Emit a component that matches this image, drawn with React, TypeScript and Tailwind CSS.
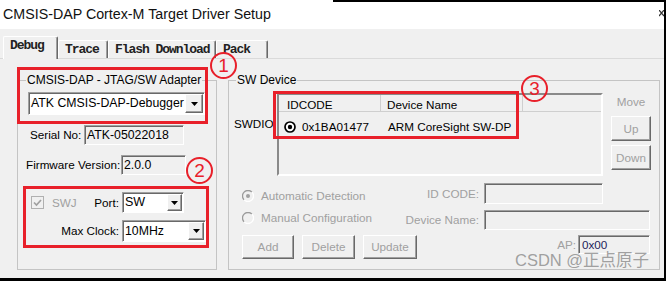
import React from "react";

const sunken =
  "border border-t-[#a0a0a0] border-l-[#a0a0a0] border-r-white border-b-white shadow-[inset_1px_1px_0_#696969]";
const raised =
  "border border-t-white border-l-white border-r-[#696969] border-b-[#696969] shadow-[inset_-1px_-1px_0_#a0a0a0]";
const muted = "text-[#a0a0a0]";

function Arrow() {
  return (
    <svg width="7" height="4" viewBox="0 0 7 4">
      <path d="M0 0h7L3.5 4z" fill="#000" />
    </svg>
  );
}

function Combo({ text, className, btn }: { text: string; className: string; btn: string }) {
  return (
    <div className={`flex items-center bg-white ${sunken} ${className}`}>
      <span className="flex-1 pl-[2px] whitespace-nowrap">{text}</span>
      <span className={`self-stretch m-[1px] flex items-center justify-center bg-[#f0f0f0] ${raised} ${btn}`}>
        <Arrow />
      </span>
    </div>
  );
}

function Btn({ label, className }: { label: string; className: string }) {
  return (
    <div className={`flex items-center justify-center bg-[#f0f0f0] ${raised} ${muted} ${className}`}>{label}</div>
  );
}

function Radio({ checked }: { checked?: boolean }) {
  return (
    <svg width="12" height="12" viewBox="0 0 12 12" className="shrink-0">
      <circle cx="6" cy="6" r="5.2" fill="#f0f0f0" />
      <path d="M9.9 2.1A5.5 5.5 0 0 0 2.1 9.9" fill="none" stroke="#9a9a9a" strokeWidth="1.3" />
      <path d="M2.1 9.9A5.5 5.5 0 0 0 9.9 2.1" fill="none" stroke="#ffffff" strokeWidth="1.3" />
      {checked && <circle cx="6" cy="6" r="2" fill="#a0a0a0" />}
    </svg>
  );
}

function Checkbox() {
  return (
    <svg width="13" height="13" viewBox="0 0 13 13" className="shrink-0">
      <rect x="0.5" y="0.5" width="12" height="12" fill="#f0f0f0" stroke="#b0b0b0" />
      <path d="M3 6.5l2.5 2.6L10 4" fill="none" stroke="#a0a0a0" strokeWidth="1.7" />
    </svg>
  );
}

function Tab({ label, active, className }: { label: string; active?: boolean; className: string }) {
  return (
    <div
      className={`shrink-0 border-t border-l border-white border-r border-r-[#696969] rounded-t-[2px] shadow-[inset_-1px_0_0_#a0a0a0] bg-[#f0f0f0] pl-[6px] leading-[15px] whitespace-nowrap ${
        active ? "h-[23px] pt-[1px] -mb-px relative" : "h-[18px] pt-[1px]"
      } ${className}`}
    >
      {label}
    </div>
  );
}

function Marker({ n, className }: { n: string; className: string }) {
  return (
    <div
      className={`absolute w-[27px] h-[27px] rounded-full border-2 border-[#e8202a] flex items-center justify-center text-[#e8202a] text-[19px] leading-none ${className}`}
    >
      {n}
    </div>
  );
}

function Group({ title, className, children }: { title: string; className: string; children: React.ReactNode }) {
  return (
    <div className={`shrink-0 h-[190px] border border-[#c4c4c4] flex flex-col ${className}`}>
      <span className="self-start -mt-[8px] px-[1px] bg-[#f0f0f0] leading-[14px] text-[12px] whitespace-nowrap">
        {title}
      </span>
      {children}
    </div>
  );
}

function Field({ label, className, box }: { label: string; className: string; box: string }) {
  return (
    <div className={`flex items-center ${className}`}>
      <span className={`w-[66px] flex justify-end pr-[5px] whitespace-nowrap ${muted}`}>{label}</span>
      <div className={`${sunken} ${box}`} />
    </div>
  );
}

export default function App() {
  return (
    <div className="relative w-[666px] h-[281px] overflow-hidden bg-[#f0f0f0] border-r-2 border-b-[3px] border-black font-['Liberation_Sans',Arial,sans-serif] text-[11.7px] text-black">
      {/* title bar */}
      <div className="h-[29px] bg-white flex flex-col">
        <div className="h-[2px] bg-[linear-gradient(to_right,transparent_333px,#000_333px)]" />
        <div className="flex items-center h-[23px] pl-[3px]">
          <span className="text-[14.25px] leading-[18px] text-[#111]">CMSIS-DAP Cortex-M Target Driver Setup</span>
          <svg width="5" height="8" viewBox="0 0 5 8" className="ml-auto">
            <path d="M0 0L5 6M0 6L5 0" stroke="#333" strokeWidth="1.2" />
          </svg>
        </div>
      </div>

      {/* tabs */}
      <div className="h-[29px] flex items-end pl-[3px] font-['Liberation_Mono',monospace] font-bold text-[13px] tracking-[-1.05px] text-[#222]">
        <Tab label="Debug" active className="w-[55px]" />
        <Tab label="Trace" className="w-[50px]" />
        <Tab label="Flash Download" className="w-[108px]" />
        <Tab label="Pack" className="w-[52px]" />
      </div>

      {/* panel */}
      <div className="h-[220px] border-t border-[#dadada] pt-[21px] pl-[17px] flex gap-[11px]">
        <Group title="CMSIS-DAP - JTAG/SW Adapter" className="w-[200px] pl-[8px]">
          <div className="flex flex-col -ml-[8px]">
            <Combo
              text="ATK CMSIS-DAP-Debugger"
              className="mt-[5px] ml-[10px] w-[177px] h-[23px] text-[12.3px]"
              btn="w-[18px]"
            />
            <div className="mt-[10px] flex items-center h-[20px]">
              <span className="ml-[12px] w-[54px]">Serial No:</span>
              <div className={`w-[100px] h-[20px] pl-[2px] flex items-center text-[12.3px] ${sunken}`}>ATK-05022018</div>
            </div>
            <div className="mt-[10px] flex items-center h-[20px]">
              <span className="ml-[8px] w-[95px] whitespace-nowrap">Firmware Version:</span>
              <div className={`w-[65px] h-[20px] pl-[2px] flex items-center text-[12.3px] ${sunken}`}>2.0.0</div>
            </div>
            <div className="mt-[17px] flex items-center h-[21px]">
              <div className="w-[104px] flex items-center pl-[13px] pr-[3px]">
                <Checkbox />
                <span className={`ml-[8px] ${muted}`}>SWJ</span>
                <span className="ml-auto">Port:</span>
              </div>
              <Combo text="SW" className="w-[62px] h-[21px] text-[12.5px]" btn="w-[15px]" />
            </div>
            <div className="mt-[7px] flex items-center h-[22px]">
              <div className="w-[104px] text-right pr-[3px]">Max Clock:</div>
              <Combo text="10MHz" className="w-[84px] h-[22px] text-[12.3px]" btn="w-[16px]" />
            </div>
          </div>
        </Group>

        <Group title="SW Device" className="w-[432px] pl-[7px]">
          <div className="flex flex-col -ml-[7px]">
            <div className="mt-[6px] flex items-start">
              <span className="ml-[5px] w-[43px] mt-[24px] leading-[14px]">SWDIO</span>
              <div className="w-[326px] h-[83px] border-2 border-t-[#8a8a8a] border-l-[#8a8a8a] border-r-white border-b-white flex flex-col">
                <div className="flex h-[17px] border-b border-[#cfcfcf] leading-[19px]">
                  <div className="w-[102px] pl-[8px] border-r border-[#cfcfcf]">IDCODE</div>
                  <div className="w-[142px] pl-[6px] border-r border-[#cfcfcf]">Device Name</div>
                  <div className="flex-1" />
                </div>
                <div className="mt-[7px] flex items-center h-[16px]">
                  <div className="w-[102px] pl-[5px] flex items-center gap-[6px]">
                    <svg width="12" height="12" viewBox="0 0 12 12">
                      <circle cx="6" cy="6" r="5" fill="#fff" stroke="#000" strokeWidth="1.7" />
                      <circle cx="6" cy="6" r="2.2" fill="#000" />
                    </svg>
                    <span>0x1BA01477</span>
                  </div>
                  <div className="pl-[7px] whitespace-nowrap">ARM CoreSight SW-DP</div>
                </div>
              </div>
              <div className="ml-[8px] w-[40px] flex flex-col">
                <span className={`mt-[2px] text-center leading-[14px] ${muted}`}>Move</span>
                <Btn label="Up" className="mt-[7px] h-[25px]" />
                <Btn label="Down" className="mt-[4px] h-[25px]" />
              </div>
            </div>

            <div className="flex items-start">
              <div className="ml-[13px] flex flex-col">
                <div className="mt-[13px] h-[14px] flex items-center gap-[7px]">
                  <Radio checked />
                  <span className={`whitespace-nowrap ${muted}`}>Automatic Detection</span>
                </div>
                <div className="mt-[8px] h-[14px] flex items-center gap-[7px]">
                  <Radio />
                  <span className={`whitespace-nowrap ${muted}`}>Manual Configuration</span>
                </div>
                <div className="mt-[10px] flex gap-[8px]">
                  <Btn label="Add" className="w-[52px] h-[24px]" />
                  <Btn label="Delete" className="w-[53px] h-[24px]" />
                  <Btn label="Update" className="w-[54px] h-[24px]" />
                </div>
              </div>
              <div className="ml-auto mr-[9px] w-[232px] flex flex-col">
                <Field label="ID CODE:" className="mt-[7px] h-[21px]" box="w-[119px] h-[21px]" />
                <Field label="Device Name:" className="mt-[6px] h-[20px]" box="w-[166px] h-[20px]" />
                <div className="mt-[5px] flex items-center justify-end h-[19px]">
                  <span className={`mr-[2px] ${muted}`}>AP:</span>
                  <div className={`w-[72px] h-[19px] pl-[3px] flex items-center text-[#23235a] ${sunken}`}>0x00</div>
                </div>
              </div>
            </div>
          </div>
        </Group>
      </div>

      {/* red annotations */}
      <div className="absolute left-[17px] top-[67px] w-[191px] h-[57px] border-[3px] border-[#e8202a]" />
      <div className="absolute left-[23px] top-[186px] w-[186px] h-[62px] border-[3px] border-[#e8202a]" />
      <div className="absolute left-[273px] top-[91px] w-[246px] h-[48px] border-[3px] border-[#e8202a]" />
      <Marker n="1" className="left-[210px] top-[52px]" />
      <Marker n="2" className="left-[186px] top-[157px]" />
      <Marker n="3" className="left-[521px] top-[75px]" />

      {/* watermark */}
      <div className="absolute left-[515px] top-[250px] text-[16.5px] leading-[20px] text-[#8a8a8a]/80 font-['Liberation_Sans','Noto_Sans_CJK_SC',sans-serif] whitespace-nowrap">
        CSDN @正点原子
      </div>
    </div>
  );
}
